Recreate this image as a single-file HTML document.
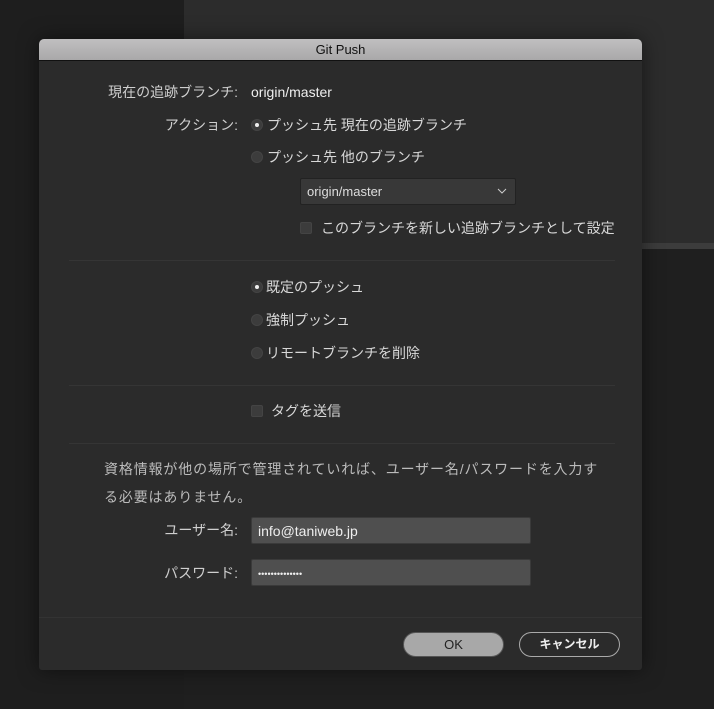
<!DOCTYPE html>
<html><head><meta charset="utf-8"><style>
*{margin:0;padding:0;box-sizing:border-box}
body{width:714px;height:709px;overflow:hidden;background:#1f1f1f;position:relative;font-family:"Liberation Sans","Noto Sans CJK JP",sans-serif;font-size:14px;color:#d8d8d8}
.a{position:absolute;white-space:nowrap;line-height:18px}
.lbl{position:absolute;right:476px;text-align:right;white-space:nowrap;color:#cfcfcf;line-height:18px}
.r{position:absolute;width:12px;height:12px;border-radius:50%;background:#3c3c3c;border:1px solid #444}
.r.on::after{content:"";position:absolute;left:3px;top:3px;width:4px;height:4px;border-radius:50%;background:#eee}
.cb{position:absolute;width:12px;height:12px;border-radius:2px;background:#3c3c3c;border:1px solid #444}
.hr{position:absolute;left:69px;width:546px;height:1px;background:#353535}
.in{position:absolute;left:251px;width:280px;height:27px;background:#4f4f4f;border:1px solid #3a3a3a;border-radius:2px;color:#eee;padding:4px 6px;line-height:18px}
</style></head><body>
<div class="a" style="left:0;top:0;width:184px;height:709px;background:#1e1e1e"></div>
<div class="a" style="left:184px;top:0;width:530px;height:243px;background:#2c2c2c"></div>
<div class="a" style="left:642px;top:243px;width:72px;height:6px;background:#3c3c3c"></div>
<div class="a" style="left:39px;top:39px;width:603px;height:631px;background:#2b2b2b;border-radius:5px 5px 3px 3px;box-shadow:0 0 20px rgba(0,0,0,.5)"></div>
<div class="a" style="left:39px;top:39px;width:603px;height:22px;background:linear-gradient(#c0bfc0,#a9a8a9);border-radius:5px 5px 0 0;border-bottom:1px solid #111;text-align:center;color:#111;font-size:13px;line-height:21px">Git Push</div>

<div class="lbl" style="top:83px">現在の追跡ブランチ:</div>
<div class="a" style="left:251px;top:83px;color:#eee">origin/master</div>
<div class="lbl" style="top:116px">アクション:</div>
<div class="r on" style="left:251px;top:119px"></div><div class="a" style="left:267px;top:116px">プッシュ先 現在の追跡ブランチ</div>
<div class="r" style="left:251px;top:151px"></div><div class="a" style="left:267px;top:148px">プッシュ先 他のブランチ</div>
<div class="a" style="left:300px;top:178px;width:216px;height:27px;background:#383838;border:1px solid #222;border-radius:2px;padding:4px 6px;color:#ddd;font-size:13px">origin/master<svg style="position:absolute;right:8px;top:9px" width="10" height="7"><path d="M1 1l4 4 4-4" stroke="#ccc" fill="none"/></svg></div>
<div class="cb" style="left:300px;top:222px"></div><div class="a" style="left:321px;top:219px">このブランチを新しい追跡ブランチとして設定</div>
<div class="hr" style="top:260px"></div>
<div class="r on" style="left:251px;top:281px"></div><div class="a" style="left:266px;top:278px">既定のプッシュ</div>
<div class="r" style="left:251px;top:314px"></div><div class="a" style="left:266px;top:311px">強制プッシュ</div>
<div class="r" style="left:251px;top:347px"></div><div class="a" style="left:266px;top:344px">リモートブランチを削除</div>
<div class="hr" style="top:385px"></div>
<div class="cb" style="left:251px;top:405px"></div><div class="a" style="left:271px;top:402px">タグを送信</div>
<div class="hr" style="top:443px"></div>
<div class="a" style="left:104px;top:460px;color:#bbb;letter-spacing:0.85px">資格情報が他の場所で管理されていれば、ユーザー名/パスワードを入力す</div>
<div class="a" style="left:104px;top:488px;color:#bbb;letter-spacing:0.85px">る必要はありません。</div>
<div class="lbl" style="top:521px">ユーザー名:</div>
<div class="in" style="top:517px">info@taniweb.jp</div>
<div class="lbl" style="top:564px">パスワード:</div>
<div class="in" style="top:559px;font-size:9px;padding-top:5px">••••••••••••••</div>
<div class="a" style="left:39px;top:617px;width:603px;height:1px;background:#333"></div>
<div class="a" style="left:403px;top:632px;width:101px;height:25px;border-radius:13px;background:#a8a8a8;border:1px solid #555;color:#222;text-align:center;line-height:23px;font-size:13px">OK</div>
<div class="a" style="left:519px;top:632px;width:101px;height:25px;border-radius:13px;background:#2b2b2b;border:1.5px solid #aaa;color:#eee;text-align:center;line-height:22px;font-weight:bold;font-size:12px">キャンセル</div>
</body></html>
